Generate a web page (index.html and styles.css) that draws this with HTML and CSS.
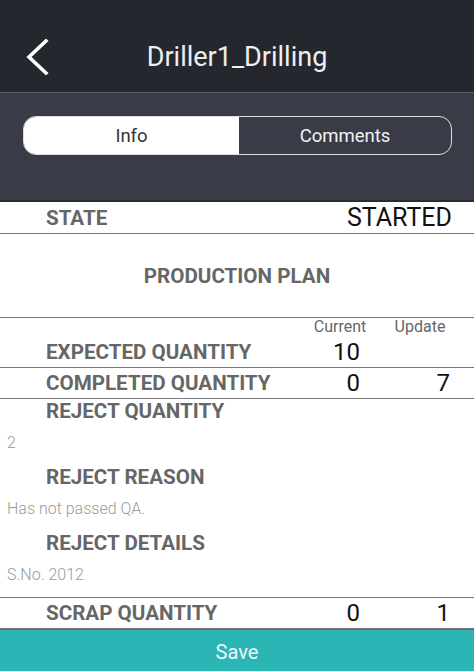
FILE: index.html
```html
<!DOCTYPE html>
<html>
<head>
<meta charset="utf-8">
<link rel="stylesheet" href="styles.css">
</head>
<body>
<div class="app">
  <header class="topbar">
    <div class="back">
      <svg width="24" height="36" viewBox="0 0 24 36"><polyline points="20,2 3,18 20,34" fill="none" stroke="#ffffff" stroke-width="3.6" stroke-linecap="square" stroke-linejoin="miter"/></svg>
    </div>
    <div class="title">Driller1_Drilling</div>
    <div></div>
  </header>
  <div class="tabbar">
    <div class="segment">
      <div class="seg seg-active">Info</div>
      <div class="seg">Comments</div>
    </div>
  </div>
  <main class="content">
    <div class="row row-state">
      <span class="label">STATE</span>
      <span class="state-value">STARTED</span>
    </div>
    <div class="section-title">PRODUCTION PLAN</div>
    <div class="qty qty-expected">
      <span></span>
      <span class="colhead">Current</span>
      <span class="colhead">Update</span>
      <span class="label">EXPECTED QUANTITY</span>
      <span class="num">10</span>
      <span class="num"></span>
    </div>
    <div class="qty">
      <span class="label">COMPLETED QUANTITY</span>
      <span class="num">0</span>
      <span class="num">7</span>
    </div>
    <div class="reject">
      <div class="label">REJECT QUANTITY</div>
      <div class="note">2</div>
      <div class="label">REJECT REASON</div>
      <div class="note">Has not passed QA.</div>
      <div class="label">REJECT DETAILS</div>
      <div class="note">S.No. 2012</div>
    </div>
    <div class="qty">
      <span class="label">SCRAP QUANTITY</span>
      <span class="num">0</span>
      <span class="num">1</span>
    </div>
  </main>
  <div class="save">Save</div>
</div>
</body>
</html>
```
FILE: styles.css
```css
html, body {
  margin: 0;
  padding: 0;
  background: #ffffff;
}
body {
  font-family: Roboto, "Liberation Sans", sans-serif;
}
.app {
  width: 474px;
  height: 671px;
  display: flex;
  flex-direction: column;
  overflow: hidden;
}
.topbar {
  height: 70px;
  padding-top: 22px;
  background: #25272f;
  border-bottom: 1px solid #5a5d68;
  display: grid;
  grid-template-columns: 1fr auto 1fr;
  align-items: center;
  flex-shrink: 0;
}
.back {
  padding-left: 26px;
  display: flex;
  align-items: center;
}
.back svg { display: block; }
.title {
  color: #eeeeee;
  font-size: 27px;
  font-weight: 400;
  line-height: 32px;
}
.tabbar {
  background: #393c47;
  padding: 23px 22px 0 23px;
  height: 84px;
  border-bottom: 2px solid #2a2c33;
  flex-shrink: 0;
}
.segment {
  display: grid;
  grid-template-columns: 215px 1fr;
  height: 39px;
  border-radius: 13px;
  overflow: hidden;
  box-sizing: border-box;
  border: 1.5px solid #dcdde2;
}
.seg {
  display: flex;
  align-items: center;
  justify-content: center;
  font-size: 18.5px;
  color: #f2f2f2;
}
.seg-active {
  background: #ffffff;
  color: #333333;
}
.content {
  flex: 1;
  display: flex;
  flex-direction: column;
}
.label {
  font-weight: 700;
  font-size: 20.6px;
  color: #666666;
}
.row {
  display: flex;
  align-items: center;
  justify-content: space-between;
  padding: 0 22px 0 46px;
  border-bottom: 1px solid #7a7a7a;
}
.row-state {
  height: 31px;
}
.state-value {
  font-size: 25px;
  color: #111111;
}
.section-title {
  height: 83px;
  display: flex;
  align-items: center;
  justify-content: center;
  font-weight: 700;
  font-size: 20.6px;
  color: #666666;
  border-bottom: 1px solid #7a7a7a;
}
.qty {
  display: grid;
  grid-template-columns: 1fr 60px 80px;
  column-gap: 10px;
  padding: 0 14px 0 46px;
  grid-auto-rows: 30px;
  align-items: center;
  border-bottom: 1px solid #7a7a7a;
}
.qty-expected {
  grid-template-rows: 18px 31px;
}
.colhead {
  font-size: 16px;
  color: #666666;
  text-align: center;
  line-height: 18px;
}
.num {
  font-size: 24px;
  color: #111111;
  text-align: right;
  padding-right: 10px;
}
.reject {
  padding: 0 0 10px 0;
  display: flex;
  flex-direction: column;
  border-bottom: 1px solid #7a7a7a;
}
.reject .label {
  padding-left: 46px;
  line-height: 24px;
}
.reject .note {
  padding-left: 7px;
  font-size: 16px;
  font-weight: 300;
  color: #9a9a9a;
  line-height: 24px;
  margin: 8px 0 10px;
}
.reject .note:last-child {
  margin-bottom: 0;
}
.save {
  height: 43px;
  background: #2bb5b4;
  color: #eef8f8;
  font-size: 20px;
  display: flex;
  align-items: center;
  justify-content: center;
  border-top: 1px solid #5f6a6a;
  flex-shrink: 0;
}
```
